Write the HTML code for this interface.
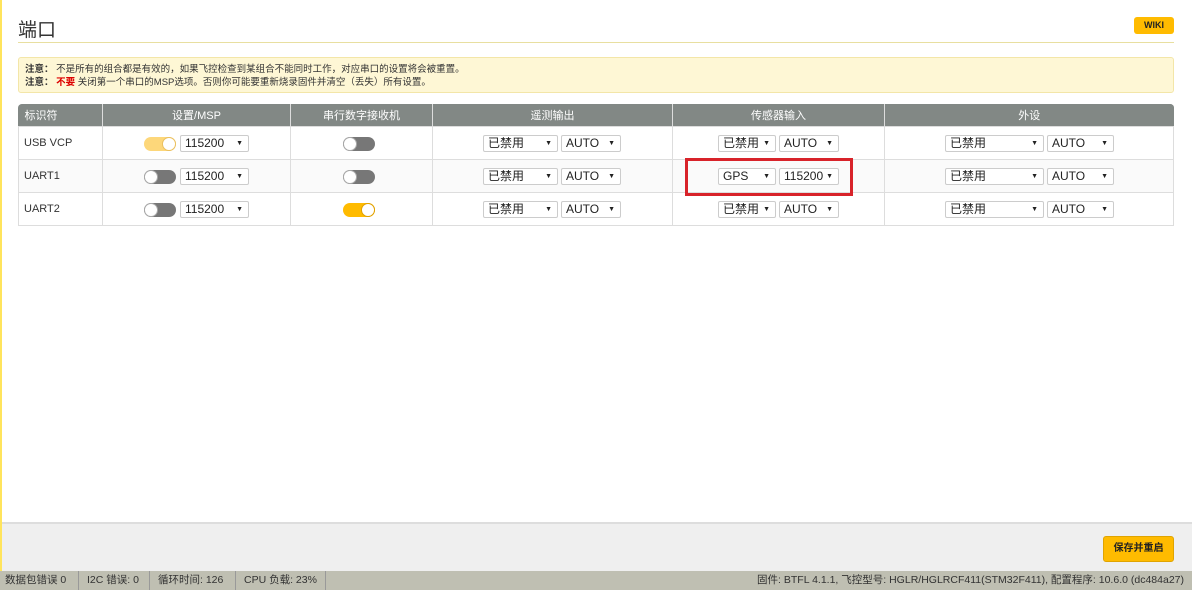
<!DOCTYPE html><html><head><meta charset="utf-8"><style>
*{margin:0;padding:0;box-sizing:border-box}
body{width:1192px;height:590px;position:relative;background:#fff;font-family:"Liberation Sans","Noto Sans CJK SC",sans-serif;color:#333;overflow:hidden}
.a{position:absolute}
.sel{position:absolute;height:17px;border:1px solid #ccc;border-radius:2px;background:#fff;font-size:12px;line-height:15px;padding-left:4px;color:#222}
.sel:after{content:"▼";position:absolute;right:5px;top:0;font-size:7px;color:#222}
.tg{position:absolute;width:32px;height:14px;border-radius:7px;background:#777}
.tg:before{content:"";position:absolute;left:0;top:0;width:14px;height:14px;border-radius:7px;background:#fff;border:1px solid #aaa;box-sizing:border-box}
.tg.on{background:#ffbb00}.tg.on:before{left:18px;border-color:#e0a000}
.tg.dis{background:#fdd77a}.tg.dis:before{left:18px;border-color:#eac060}
table{position:absolute;left:18px;top:104px;width:1156px;border-collapse:collapse;font-size:11px}
th{background:#828885;color:#fff;font-weight:normal;height:22px;border-right:1px solid #ddd}
td{height:33px;border:1px solid #ddd;position:relative;vertical-align:middle}
tr:nth-child(odd) td{background:#fafafa}
</style></head><body>
<div class="a" style="left:0;top:0;width:2px;height:571px;background:#ffe45c"></div>
<div class="a" style="left:18px;top:15px;font-size:19px;color:#333">端口</div>
<div class="a" style="left:18px;top:42px;width:1156px;height:1px;background:#e8dfa0"></div>
<div class="a" style="left:1134px;top:17px;width:40px;height:17px;background:#ffbb00;border-radius:3px;font-size:9px;font-weight:bold;color:#222;text-align:center;line-height:17px">WIKI</div>
<div class="a" style="left:18px;top:57px;width:1156px;height:36px;background:#fef7d5;border:1px solid #f3e6a8;border-radius:3px;font-size:9.5px;line-height:13px;padding:5px 0 0 6px;color:#333">
<div><b>注意：</b> 不是所有的组合都是有效的，如果飞控检查到某组合不能同时工作，对应串口的设置将会被重置。</div>
<div><b>注意：</b> <b style="color:#d00">不要</b> 关闭第一个串口的MSP选项。否则你可能要重新烧录固件并清空（丢失）所有设置。</div></div>
<div class="a" style="left:18px;top:104px;width:1156px;height:22px;background:#828885;border-radius:4px 4px 0 0"></div>
<table>
<tr><th style="width:84px;text-align:left;padding-left:6px;border-radius:4px 0 0 0">标识符</th><th style="width:188px">设置/MSP</th><th style="width:142px">串行数字接收机</th><th style="width:240px">遥测输出</th><th style="width:212px">传感器输入</th><th style="border-right:none;border-radius:0 4px 0 0">外设</th></tr>
<tr><td style="padding-left:5px">USB VCP</td><td><div class="tg dis" style="left:41px;top:10px"></div><div class="sel" style="left:77px;top:8px;width:69px">115200</div></td><td><div class="tg" style="left:52px;top:10px"></div></td><td><div class="sel" style="left:50px;top:8px;width:75px">已禁用</div><div class="sel" style="left:128px;top:8px;width:60px">AUTO</div></td><td><div class="sel" style="left:45px;top:8px;width:58px">已禁用</div><div class="sel" style="left:106px;top:8px;width:60px">AUTO</div></td><td><div class="sel" style="left:60px;top:8px;width:99px">已禁用</div><div class="sel" style="left:162px;top:8px;width:67px">AUTO</div></td></tr>
<tr><td style="padding-left:5px">UART1</td><td><div class="tg" style="left:41px;top:10px"></div><div class="sel" style="left:77px;top:8px;width:69px">115200</div></td><td><div class="tg" style="left:52px;top:10px"></div></td><td><div class="sel" style="left:50px;top:8px;width:75px">已禁用</div><div class="sel" style="left:128px;top:8px;width:60px">AUTO</div></td><td><div class="sel" style="left:45px;top:8px;width:58px">GPS</div><div class="sel" style="left:106px;top:8px;width:60px">115200</div><div class="a" style="left:12px;top:-2px;width:168px;height:38px;border:3px solid #d8232a"></div></td><td><div class="sel" style="left:60px;top:8px;width:99px">已禁用</div><div class="sel" style="left:162px;top:8px;width:67px">AUTO</div></td></tr>
<tr><td style="padding-left:5px">UART2</td><td><div class="tg" style="left:41px;top:10px"></div><div class="sel" style="left:77px;top:8px;width:69px">115200</div></td><td><div class="tg on" style="left:52px;top:10px"></div></td><td><div class="sel" style="left:50px;top:8px;width:75px">已禁用</div><div class="sel" style="left:128px;top:8px;width:60px">AUTO</div></td><td><div class="sel" style="left:45px;top:8px;width:58px">已禁用</div><div class="sel" style="left:106px;top:8px;width:60px">AUTO</div></td><td><div class="sel" style="left:60px;top:8px;width:99px">已禁用</div><div class="sel" style="left:162px;top:8px;width:67px">AUTO</div></td></tr>
</table>
<div class="a" style="left:2px;top:522px;width:1190px;height:49px;background:#efefef;border-top:2px solid #ddd"></div>
<div class="a" style="left:1103px;top:536px;width:71px;height:26px;background:#ffbb00;border:1px solid #e0a400;border-radius:3px;font-size:10px;font-weight:bold;color:#222;text-align:center;line-height:24px">保存并重启</div>
<div class="a" style="left:0;top:571px;width:1192px;height:19px;background:#bfbfb2;font-size:10.5px;line-height:19px;color:#333">
<span class="a" style="left:5px">数据包错误 0</span><span class="a" style="left:78px;height:19px;border-left:1px solid #999"></span>
<span class="a" style="left:87px">I2C 错误: 0</span><span class="a" style="left:149px;height:19px;border-left:1px solid #999"></span>
<span class="a" style="left:158px">循环时间: 126</span><span class="a" style="left:235px;height:19px;border-left:1px solid #999"></span>
<span class="a" style="left:244px">CPU 负载: 23%</span><span class="a" style="left:325px;height:19px;border-left:1px solid #999"></span>
<span class="a" style="right:8px">固件: BTFL 4.1.1, 飞控型号: HGLR/HGLRCF411(STM32F411), 配置程序: 10.6.0 (dc484a27)</span></div>
</body></html>
